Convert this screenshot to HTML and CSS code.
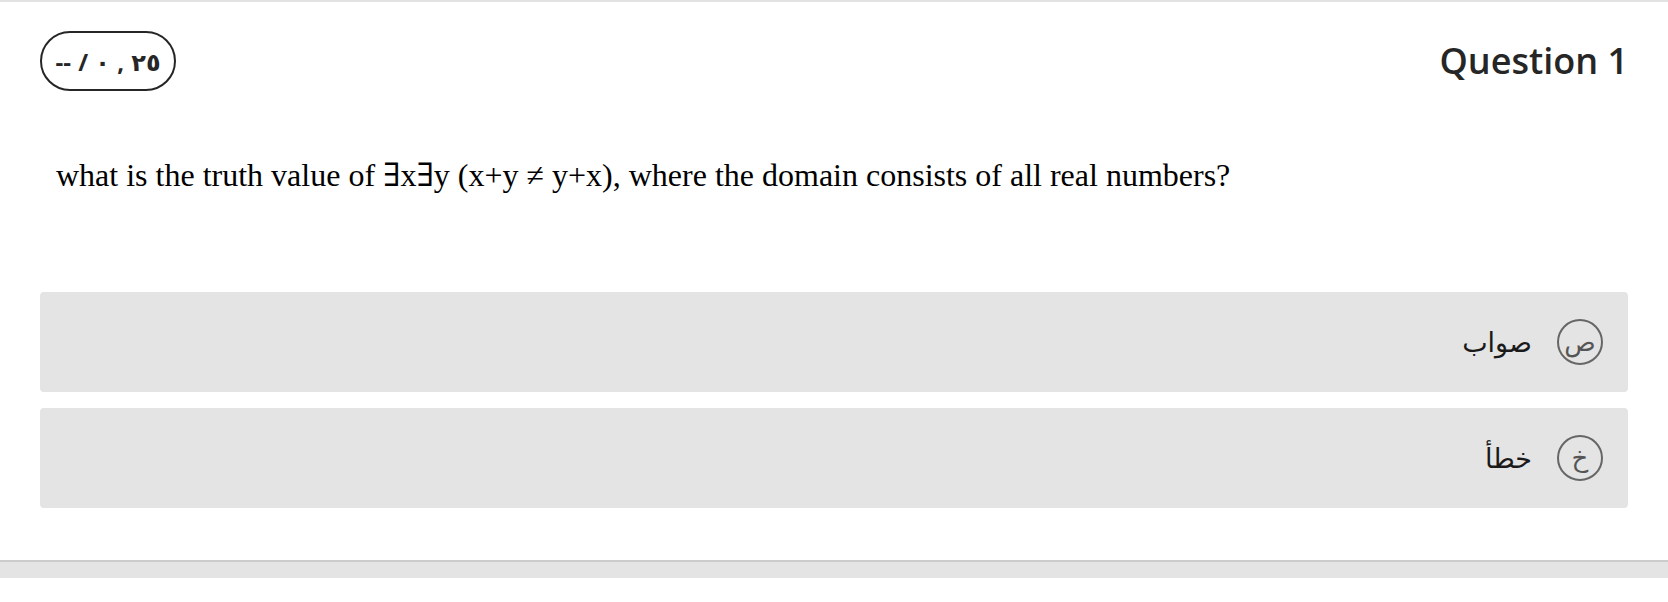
FILE: index.html
```html
<!DOCTYPE html>
<html lang="ar">
<head>
<meta charset="utf-8">
<title>Question 1</title>
<link rel="stylesheet" href="styles.css">
</head>
<body>
<div class="topline"></div>
<section class="question">
  <div class="header">
    <div class="points">-- / ٠ , ٢٥</div>
    <h2 class="title" dir="ltr">Question 1</h2>
  </div>
  <p class="prompt" dir="ltr">what is the truth value of ∃x∃y (x+y ≠ y+x), where the domain consists of all real numbers?</p>
  <div class="options">
    <div class="option" dir="rtl">
      <span class="letter">ص</span>
      <span class="label">صواب</span>
    </div>
    <div class="option" dir="rtl">
      <span class="letter">خ</span>
      <span class="label">خطأ</span>
    </div>
  </div>
</section>
<div class="bottomline"></div>
<div class="bottomband"></div>
</body>
</html>
```

FILE: styles.css
```css
* { box-sizing: border-box; }
html, body {
  margin: 0;
  padding: 0;
  background: #ffffff;
}
body {
  font-family: "Open Sans", "DejaVu Sans", sans-serif;
  color: #262626;
}
.topline {
  height: 2px;
  background: #e2e2e2;
}
.question {
  padding: 0 40px;
}
.header {
  display: flex;
  justify-content: space-between;
  align-items: center;
  margin-top: 29px;
  height: 60px;
}
.points {
  height: 60px;
  width: 136px;
  border: 2px solid #262626;
  border-radius: 30px;
  display: flex;
  align-items: center;
  justify-content: center;
  direction: ltr;
  unicode-bidi: bidi-override;
  font-family: "Open Sans", "DejaVu Sans", sans-serif;
  font-weight: 700;
  font-size: 24px;
  word-spacing: 1px;
  white-space: nowrap;
  color: #262626;
}
.title {
  margin: 0;
  font-size: 36px;
  font-weight: 600;
  line-height: 42px;
  color: #262626;
}
.prompt {
  margin: 66px 0 0 16px;
  font-family: "Liberation Serif", "DejaVu Serif", serif;
  font-size: 32px;
  line-height: 37px;
  color: #000000;
}
.options {
  margin-top: 98px;
  display: flex;
  flex-direction: column;
  gap: 16px;
}
.option {
  height: 100px;
  background: #e4e4e4;
  border-radius: 4px;
  display: flex;
  align-items: center;
  gap: 25px;
  padding-right: 25px;
}
.letter {
  width: 46px;
  height: 46px;
  border: 2px solid #666666;
  border-radius: 50%;
  display: flex;
  align-items: center;
  justify-content: center;
  font-family: "DejaVu Sans", sans-serif;
  font-size: 26px;
  color: #555555;
  line-height: 1;
}
.label {
  font-family: "DejaVu Sans", sans-serif;
  font-size: 27px;
  color: #1a1a1a;
}
.bottomline {
  margin-top: 52px;
  height: 2px;
  background: #cccccc;
}
.bottomband {
  height: 16px;
  background: #e4e4e4;
}
```
